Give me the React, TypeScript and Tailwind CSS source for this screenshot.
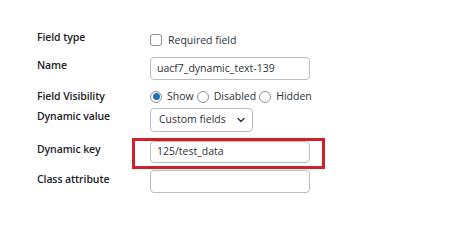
import React from 'react';

const font = { fontFamily: '"Open Sans", "Noto Sans", sans-serif' };

const Label: React.FC<{ text: string; className?: string }> = ({ text, className }) => (
  <div className={`w-[113px] shrink-0 text-[10.5px] font-semibold tracking-[-0.1px] text-[#1d2327] ${className ?? ''}`}>{text}</div>
);

const Radio: React.FC<{ checked?: boolean }> = ({ checked }) => (
  <span className="flex h-[12px] w-[12px] shrink-0 items-center justify-center rounded-full border border-[#8c8f94] bg-white">
    {checked ? <span className="h-[7px] w-[7px] rounded-full bg-[#2271b1]" /> : null}
  </span>
);

export default function App() {
  return (
    <div className="h-[247px] w-[474px] bg-white text-[#2c3338]" style={font}>
      <div className="pl-[37px] pt-[30px]">
        {/* Field type */}
        <div className="flex h-[22px] items-start">
          <Label text="Field type" />
          <div className="flex items-center gap-[6px] pt-[4px]">
            <span className="h-[12px] w-[12px] rounded-[3px] border border-[#8c8f94] bg-white" />
            <span className="text-[10.5px] leading-none">Required field</span>
          </div>
        </div>

        {/* Name */}
        <div className="mt-[5px] flex items-start">
          <Label text="Name" className="pt-[1px]" />
          <div className="flex h-[23px] w-[160px] items-center rounded-[4px] border border-[#b8bcc0] bg-white px-[6px] text-[10.5px]">
            uacf7_dynamic_text-139
          </div>
        </div>

        {/* Field Visibility */}
        <div className="mt-[9px] flex items-center">
          <Label text="Field Visibility" />
          <div className="flex items-center text-[10.5px]">
            <Radio checked />
            <span className="ml-[5px] mr-[3px]">Show</span>
            <Radio />
            <span className="ml-[5px] mr-[3px]">Disabled</span>
            <Radio />
            <span className="ml-[5px]">Hidden</span>
          </div>
        </div>

        {/* Dynamic value */}
        <div className="mt-[3px] flex items-start">
          <Label text="Dynamic value" className="pt-[1px]" />
          <div className="flex h-[24px] w-[103px] items-center justify-between rounded-[4px] border border-[#b8bcc0] bg-white pl-[8px] pr-[6px] text-[10.5px]">
            <span>Custom fields</span>
            <svg width="10" height="10" viewBox="0 0 10 10" fill="none">
              <path d="M2 3.5 L5 6.5 L8 3.5" stroke="#2c3338" strokeWidth="1.3" strokeLinecap="round" strokeLinejoin="round" />
            </svg>
          </div>
        </div>

        {/* Dynamic key */}
        <div className="mt-[9px] flex items-start">
          <Label text="Dynamic key" className="pt-[1px]" />
          <div className="relative">
            <div className="flex h-[22px] w-[160px] items-center rounded-[4px] border border-[#b8bcc0] bg-white px-[6px] text-[10.5px]">
              125/test_data
            </div>
            <div className="pointer-events-none absolute -bottom-[6px] -left-[18px] -right-[15px] -top-[3px] border-[3px] border-[#d0202a]" />
          </div>
        </div>

        {/* Class attribute */}
        <div className="mt-[7px] flex items-start">
          <Label text="Class attribute" className="pt-[2px]" />
          <div className="h-[23px] w-[160px] rounded-[4px] border border-[#b8bcc0] bg-white" />
        </div>
      </div>
    </div>
  );
}
